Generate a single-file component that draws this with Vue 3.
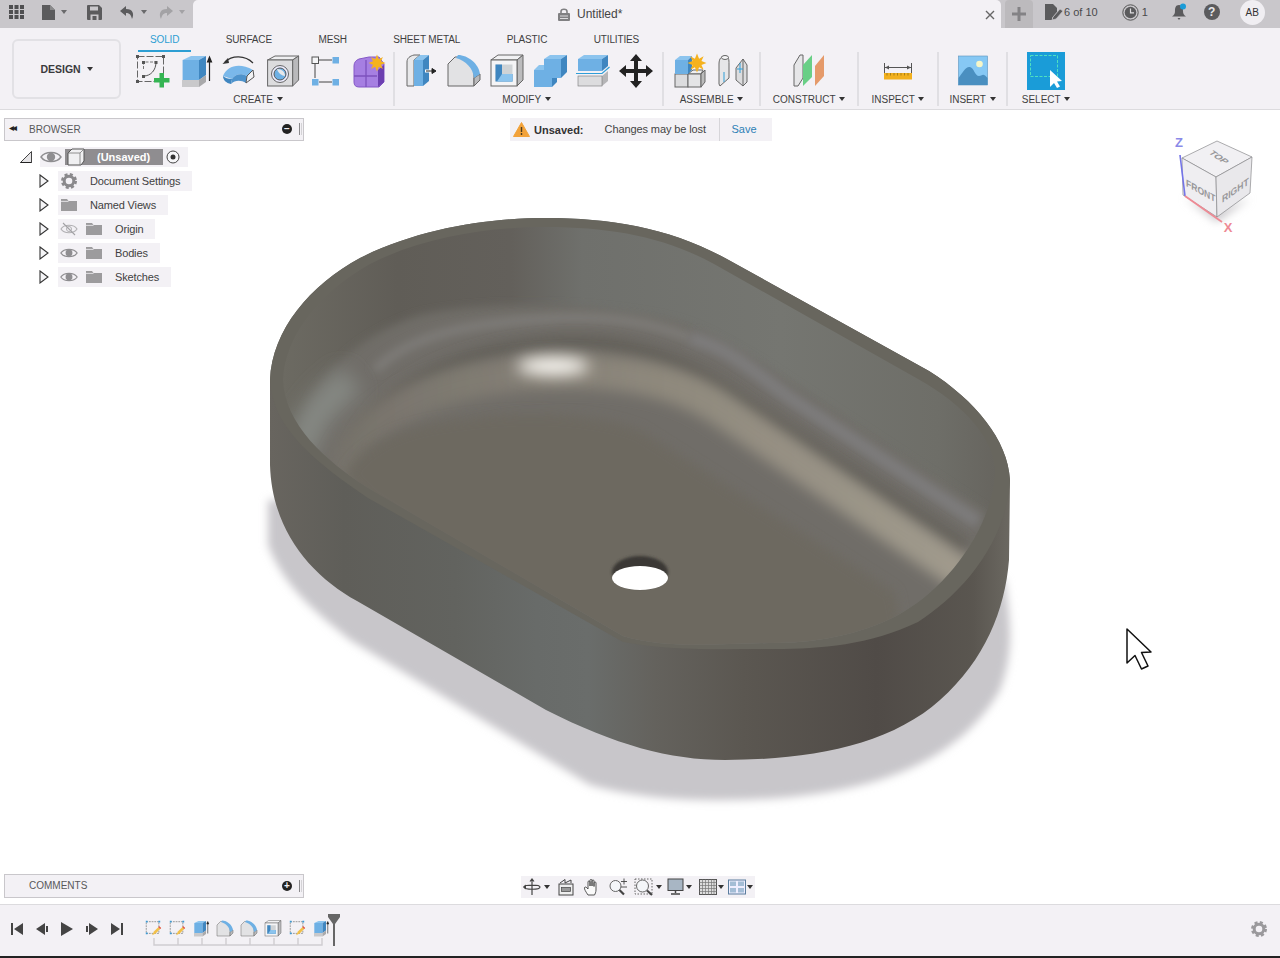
<script setup>
const tabs = ['SOLID', 'SURFACE', 'MESH', 'SHEET METAL', 'PLASTIC', 'UTILITIES']
const tree = [
  { name: 'Document Settings', kind: 'gear' },
  { name: 'Named Views', kind: 'folder' },
  { name: 'Origin', kind: 'off' },
  { name: 'Bodies', kind: 'eye' },
  { name: 'Sketches', kind: 'eye' },
]
const timeline = ['tl-sketch', 'tl-sketch', 'i-extrude', 'i-fillet', 'i-fillet', 'i-shell', 'tl-sketch', 'i-extrude']
const star = '0,-10 2.2,-4.5 7,-7 4.7,-2 10,0 4.7,2 7,7 2.2,4.5 0,10 -2.2,4.5 -7,7 -4.7,2 -10,0 -4.7,-2 -7,-7 -2.2,-4.5'
</script>

<template>
  <div class="app">
    <svg class="defs" aria-hidden="true">
      <defs>
        <symbol id="i-extrude" viewBox="0 0 36 36">
          <polygon points="4.6,8 13,4 28,4 21,8" fill="#8cc4ee" />
          <rect x="4.6" y="8" width="16.4" height="20" fill="#6eb0e4" />
          <polygon points="21,8 28,4 28,23 21,28" fill="#3f86c0" />
          <rect x="4" y="28" width="17" height="7" fill="#c9c9cb" />
          <polygon points="21,28 28,23 28,30 21,35" fill="#a9a9ab" />
          <path d="M31.5 29V7M29.5 10l2-5 2 5z" stroke="#222" stroke-width="1.2" fill="#222" />
        </symbol>
        <symbol id="i-fillet" viewBox="0 0 36 36">
          <path d="M2 34V12L9 5H14C22 5 29 14 28 26V34Z" fill="#e2e2e4" stroke="#666" />
          <path d="M28 26L34 22V28L28 34Z" fill="#b9b9bb" stroke="#666" />
          <path d="M12 3C22 3 33 12 34 22L28 26C27 16 20 9 10 6Z" fill="#6eb0e4" />
        </symbol>
        <symbol id="i-shell" viewBox="0 0 36 36">
          <polygon points="2,8 9,3 34,3 28,8" fill="#f1f1f3" stroke="#666" />
          <polygon points="28,8 34,3 34,28 28,34" fill="#bcbcbe" stroke="#666" />
          <rect x="2" y="8" width="26" height="26" fill="#f4f4f6" stroke="#666" />
          <rect x="6.5" y="12.5" width="17" height="17" fill="#cfd3d6" />
          <path d="M6.5 12.5H13V22H23.5V29.5H6.5Z" fill="#3f86c0" />
          <polygon points="13,22 23.5,22 23.5,29.5 8,29.5" fill="#8cc4ee" />
        </symbol>
        <symbol id="tl-sketch" viewBox="0 0 20 20">
          <rect x="2.5" y="3" width="14" height="13" fill="none" stroke="#777" stroke-width=".8" stroke-dasharray="2 1" />
          <path d="M2 2h2v2H2zM16 2h2v2h-2zM2 15h2v2H2z" fill="#3a9bd8" />
          <path d="M9 18L11 14L17 8L19 10L13 16Z" fill="#f2c04a" />
          <path d="M17 8L19 10L18 11L16 9Z" fill="#e04a5e" />
        </symbol>
        <symbol id="i-eye" viewBox="0 0 22 14">
          <path d="M1 7C5 1 17 1 21 7C17 13 5 13 1 7Z" fill="none" stroke="#8f8e91" stroke-width="1.4" />
          <circle cx="11" cy="7" r="4.2" fill="#8f8e91" />
        </symbol>
        <symbol id="i-folder" viewBox="0 0 18 14">
          <path d="M1 1H7L8.5 3H17V13H1Z" fill="#9c9b9d" />
          <path d="M1 3.4H8.5" stroke="#f3f1f5" stroke-width=".8" />
        </symbol>
      </defs>
    </svg>

    <header class="titlebar">
      <div class="tb-left">
        <svg class="ic-apps" width="15" height="14" viewBox="0 0 15 14"><path d="M0 0h4v4H0zM5.5 0h4v4h-4zM11 0h4v4h-4zM0 5h4v4H0zM5.5 5h4v4h-4zM11 5h4v4h-4zM0 10h4v4H0zM5.5 10h4v4h-4zM11 10h4v4h-4z" fill="#4f4f51" /></svg>
        <svg class="ic-file" width="13" height="15" viewBox="0 0 13 15"><path d="M0 0H8L13 5V15H0Z" fill="#5b5b5d" /><path d="M8 0V5H13" fill="#8a8a8c" /></svg>
        <i class="caret"></i>
        <svg class="ic-save" width="15" height="15" viewBox="0 0 15 15"><path d="M1 0H12L15 3V14Q15 15 14 15H1Q0 15 0 14V1Q0 0 1 0Z" fill="#5b5b5d" /><path d="M3 1.5H11V5.5H3ZM3.5 9.5H11.5V15H3.5Z" fill="#c9c7cb" /><rect x="5.5" y="11" width="4" height="4" fill="#5b5b5d" /></svg>
        <svg class="ic-undo" width="15" height="13" viewBox="0 0 15 13"><path d="M6 0L0 5L6 10V7C9 7 11 8.5 12 13C14.500 8 13 3 6 3Z" fill="#5b5b5d" /></svg>
        <i class="caret"></i>
        <svg class="ic-redo" width="15" height="13" viewBox="0 0 15 13"><path d="M9 0L15 5L9 10V7C6 7 4 8.500 3 13C.5 8 2 3 9 3Z" fill="#a3a2a5" /></svg>
        <i class="caret light"></i>
      </div>
      <div class="doc-tab">
        <svg class="ic-lock" width="12" height="13" viewBox="0 0 12 13"><path d="M3 6V3.500C3 .5 9 .5 9 3.500V6" fill="none" stroke="#808082" stroke-width="1.6" /><rect x="0" y="5" width="12" height="8" rx="1" fill="#808082" /><path d="M2 8H10M2 10.500H10" stroke="#f3f1f5" stroke-width=".8" /></svg>
        <span class="doc-name">Untitled*</span>
        <svg class="ic-close" width="10" height="10" viewBox="0 0 10 10"><path d="M1 1L9 9M9 1L1 9" stroke="#666" stroke-width="1.4" /></svg>
      </div>
      <div class="new-tab">
        <svg width="14" height="14" viewBox="0 0 14 14"><path d="M7 0V14M0 7H14" stroke="#838285" stroke-width="3" /></svg>
      </div>
      <div class="tb-right">
        <svg class="ic-doc" width="18" height="16" viewBox="0 0 18 16"><path d="M0 0H8L12 4V8L7 14V16H0Z" fill="#5b5b5d" /><path d="M8 13L15 5L18 7L11 15L7 16Z" fill="#5b5b5d" stroke="#c9c7cb" stroke-width=".7" /></svg>
        <span class="count">6 of 10</span>
        <svg class="ic-clock" width="17" height="17" viewBox="0 0 17 17"><circle cx="8.500" cy="8.500" r="7.700" fill="none" stroke="#555" stroke-width="1" /><circle cx="8.500" cy="8.500" r="5.800" fill="#5b5b5d" /><path d="M8.500 4.500V8.800H12" fill="none" stroke="#dedde0" stroke-width="1.200" /></svg>
        <span class="count one">1</span>
        <svg class="ic-bell" width="16" height="18" viewBox="0 0 16 18"><path d="M7 2C3.500 2 3 5 3 8C3 11 2 12 0 13.500H14C12 12 11 11 11 8C11 5 10.500 2 7 2Z" fill="#5b5b5d" /><path d="M5.500 15H8.500L7 17Z" fill="#5b5b5d" /><circle cx="11" cy="3.500" r="3" fill="#1a9cd8" /></svg>
        <span class="help">?</span>
        <span class="avatar">AB</span>
      </div>
    </header>

    <section class="toolbar">
      <button class="design">DESIGN <i class="caret dark"></i></button>
      <div class="tool-col">
        <nav class="tabs">
          <span v-for="(t, i) in tabs" :key="t" class="tab" :class="{ active: i === 0 }">{{ t }}</span>
        </nav>
        <div class="groups">
          <div class="group g-create">
            <div class="cells">
              <div class="cell">
                <svg width="36" height="36" viewBox="0 0 36 36">
                  <rect x="2.500" y="4.500" width="26" height="25" fill="none" stroke="#666" stroke-dasharray="7 2" />
                  <path d="M8.500 17V10H21" fill="none" stroke="#777" stroke-dasharray="3 1.500" />
                  <path d="M8.500 24C16 24 21 18 21 10" fill="none" stroke="#555" />
                  <path d="M1 3h3v3H1zM27 3h3v3h-3zM1 28h3v3H1zM7 9h3v3H7zM19.500 9h3v3h-3zM7 23h3v3H7z" fill="#555" />
                  <path d="M24.500 21H29V26H34.500V30.500H29V35.500H24.500V30.500H19V26H24.500Z" fill="#35b553" />
                </svg>
              </div>
              <div class="cell"><svg width="36" height="36"><use href="#i-extrude" /></svg></div>
              <div class="cell">
                <svg width="36" height="36" viewBox="0 0 36 36">
                  <path d="M4 10C11 3 24 3 32 11" fill="none" stroke="#333" stroke-width="1.200" />
                  <path d="M1.500 12L7 6L8 11Z" fill="#333" />
                  <path d="M2 24C6 14 18 10 32 18L26 24C20 21 14 22 11 27Z" fill="#7ab8ea" />
                  <path d="M2 24C2 28 5 31 10 32L11 27C7 27 4 26 2 24Z" fill="#3f86c0" />
                  <path d="M11 27C14 22 20 21 26 24L25 31C20 28 14 28 10 32Z" fill="#4e93cc" />
                  <polygon points="26,24 32,18 33,25 25,31" fill="#f2f2f4" stroke="#555" />
                </svg>
              </div>
              <div class="cell">
                <svg width="36" height="36" viewBox="0 0 36 36">
                  <polygon points="2.600,8 10,4 33.600,4 27.600,8" fill="#efeff1" stroke="#666" />
                  <polygon points="27.600,8 33.600,4 33.600,28 27.600,34" fill="#b9b9bb" stroke="#666" />
                  <rect x="2.600" y="8" width="25" height="26" fill="#dcdcde" stroke="#666" />
                  <circle cx="15" cy="22" r="8.500" fill="#eef" stroke="#666" />
                  <circle cx="15" cy="22" r="6" fill="#6eb0e4" stroke="#555" />
                  <path d="M12 17C17 17 20 20 20 24C17 24 13 21 12 17Z" fill="#e8e8ea" />
                </svg>
              </div>
              <div class="cell">
                <svg width="36" height="36" viewBox="0 0 36 36">
                  <path d="M11 8H24M7 12V26M11 30H24" stroke="#444" stroke-width="1" />
                  <rect x="4" y="5" width="6.500" height="6.500" fill="#f5f5f7" stroke="#555" />
                  <rect x="24.500" y="5" width="6.500" height="6.500" fill="#6eb0e4" />
                  <rect x="4" y="27" width="6.500" height="6.500" fill="#6eb0e4" />
                  <rect x="24.500" y="27" width="6.500" height="6.500" fill="#6eb0e4" />
                </svg>
              </div>
              <div class="cell">
                <svg width="36" height="36" viewBox="0 0 36 36">
                  <path d="M3 14Q3 9 8 7L18 5H28L33 12V30L28 35H8Q3 35 3 30Z" fill="#a67fe2" stroke="#8458c6" />
                  <path d="M3 24H26M15 8V35" stroke="#7d52bd" stroke-width="1.300" />
                  <path d="M27 18L33 13V30L27 35Z" fill="#6c3fb0" />
                  <g transform="translate(26 11)"><polygon :points="star" transform="scale(.85)" fill="#f5b21e" /></g>
                </svg>
              </div>
            </div>
            <div class="label l-create">CREATE <i class="caret dark"></i></div>
          </div>

          <div class="group g-modify">
            <div class="cells">
              <div class="cell">
                <svg width="36" height="36" viewBox="0 0 36 36">
                  <path d="M4 34V10C4 6 7 4 11 3H17L11 8V34Z" fill="#e8e8ea" stroke="#666" />
                  <polygon points="11,8 17,3 26,3 20,8" fill="#8cc4ee" />
                  <rect x="11" y="8" width="9" height="26" fill="#6eb0e4" />
                  <polygon points="20,8 26,3 26,29 20,34" fill="#3f86c0" />
                  <path d="M22 19H30" stroke="#fff" stroke-width="3" />
                  <path d="M23 19H30M29 16.500L33 19L29 21.500Z" stroke="#222" stroke-width="1" fill="#222" />
                </svg>
              </div>
              <div class="cell"><svg width="36" height="36"><use href="#i-fillet" /></svg></div>
              <div class="cell"><svg width="36" height="36"><use href="#i-shell" /></svg></div>
              <div class="cell">
                <svg width="36" height="36" viewBox="0 0 36 36">
                  <polygon points="2,18 7,13 25,13 20,18" fill="#8cc4ee" />
                  <rect x="2" y="18" width="18" height="17" fill="#6eb0e4" />
                  <polygon points="20,18 25,13 25,30 20,35" fill="#3f86c0" />
                  <polygon points="12,7 18,3 35,3 29,7" fill="#8cc4ee" />
                  <rect x="12" y="7" width="17" height="19" fill="#6eb0e4" />
                  <polygon points="29,7 35,3 35,20 29,26" fill="#3f86c0" />
                </svg>
              </div>
              <div class="cell">
                <svg width="36" height="36" viewBox="0 0 36 36">
                  <polygon points="3,7 9,3 33,3 27,7" fill="#8cc4ee" />
                  <rect x="3" y="7" width="24" height="12" fill="#6eb0e4" />
                  <polygon points="27,7 33,3 33,14 27,19" fill="#3f86c0" />
                  <polygon points="27,24 33,19 33,29 27,34" fill="#b5b5b7" />
                  <rect x="3" y="24" width="24" height="10" fill="#dcdcde" stroke="#777" stroke-width=".6" />
                  <path d="M1 21.500H27L34.500 15" fill="none" stroke="#2f9ed8" stroke-width="1.200" />
                </svg>
              </div>
              <div class="cell">
                <svg width="36" height="36" viewBox="0 0 36 36">
                  <path d="M18 2L24 9H20V17H28V13L35 19L28 25V21H20V29H24L18 36L12 29H16V21H8V25L1 19L8 13V17H16V9H12Z" fill="#222" />
                </svg>
              </div>
            </div>
            <div class="label l-modify">MODIFY <i class="caret dark"></i></div>
          </div>

          <div class="group g-assemble">
            <div class="cells">
              <div class="cell">
                <svg width="36" height="36" viewBox="0 0 36 36">
                  <rect x="3" y="22" width="13" height="13" fill="#dcdcde" stroke="#666" />
                  <polygon points="16,22 21,18 31,18 29,22" fill="#efeff1" stroke="#666" />
                  <rect x="16" y="22" width="13" height="13" fill="#e4e4e6" stroke="#666" />
                  <polygon points="29,22 33,18 33,30 29,35" fill="#bbb" stroke="#666" />
                  <rect x="3" y="8" width="13" height="14" fill="#6eb0e4" />
                  <polygon points="3,8 8,4 20,4 16,8" fill="#8cc4ee" />
                  <polygon points="16,8 20,4 20,18 16,22" fill="#3f86c0" />
                  <g transform="translate(25 11)"><polygon :points="star" transform="scale(.95)" fill="#f5b21e" /></g>
                </svg>
              </div>
              <div class="cell">
                <svg width="36" height="36" viewBox="0 0 36 36">
                  <path d="M3 32V12C3 6 6 4 9 4C13 4 13 8 13 12V26L4 34Z" fill="#e6e6e8" stroke="#666" />
                  <ellipse cx="9" cy="5.500" rx="3.500" ry="2" fill="#f5f5f7" stroke="#666" />
                  <path d="M8 20V30" stroke="#2f9ed8" />
                  <path d="M20 16L27 7L31 13V30L27 34L20 28Z" fill="#dcdcde" stroke="#666" />
                  <path d="M27 7V34" stroke="#666" />
                  <path d="M24 11V21M21 17H27" stroke="#2f9ed8" />
                </svg>
              </div>
            </div>
            <div class="label">ASSEMBLE <i class="caret dark"></i></div>
          </div>

          <div class="group g-construct">
            <div class="cells">
              <div class="cell">
                <svg width="36" height="36" viewBox="0 0 36 36">
                  <path d="M3 34V13L9 3H12V26L7 34Z" fill="#e6e6e8" stroke="#666" />
                  <polygon points="12,13 21,3 21,25 12,34" fill="#69cf86" />
                  <polygon points="24,14 33,3 33,24 24,34" fill="#e59a6a" />
                </svg>
              </div>
            </div>
            <div class="label">CONSTRUCT <i class="caret dark"></i></div>
          </div>

          <div class="group g-inspect">
            <div class="cells">
              <div class="cell">
                <svg width="36" height="36" viewBox="0 0 36 36">
                  <path d="M4.500 11V22M31.500 11V22M5 15.500H31" stroke="#555" />
                  <path d="M5 15.500L9 13.500V17.500ZM31 15.500L27 13.500V17.500Z" fill="#555" />
                  <rect x="4" y="21" width="28" height="6.500" fill="#f2b01e" />
                  <path d="M7 21v2.500M10.500 21v2.500M14 21v2.500M17.500 21v2.500M21 21v2.500M24.500 21v2.500M28 21v2.500" stroke="#8a6a10" stroke-width=".7" />
                </svg>
              </div>
            </div>
            <div class="label">INSPECT <i class="caret dark"></i></div>
          </div>

          <div class="group g-insert">
            <div class="cells">
              <div class="cell">
                <svg width="36" height="36" viewBox="0 0 36 36">
                  <rect x="3.500" y="4" width="29" height="29" fill="#86c8f4" stroke="#5a93bd" stroke-width=".6" />
                  <circle cx="24.500" cy="12" r="3.300" fill="#f6f6c8" />
                  <path d="M3.500 26C8 20 11 14 15 15C19 16 20 24 24 24C27 24 28 20 32.500 26V33H3.500Z" fill="#4a8fc0" />
                </svg>
              </div>
            </div>
            <div class="label">INSERT <i class="caret dark"></i></div>
          </div>

          <div class="group g-select">
            <div class="cells">
              <div class="cell">
                <svg width="38" height="38" viewBox="0 0 38 38">
                  <rect width="38" height="38" fill="#1a9cd8" />
                  <rect x="3.500" y="3.500" width="27" height="21" fill="none" stroke="#4fe0c0" stroke-dasharray="3 1.500" />
                  <path d="M23 18V35L27 31L30 36L33 34.500L30 29.500L35 29Z" fill="#fff" />
                </svg>
              </div>
            </div>
            <div class="label">SELECT <i class="caret dark"></i></div>
          </div>
        </div>
      </div>
    </section>

    <main class="viewport">
      <svg class="model" viewBox="0 110 1280 794" width="1280" height="794">
        <defs>
          <clipPath id="innerClip">
            <path d="M283 380C285 335 320 292 370 264C425 236 490 227 546 227C610 227 665 237 714 264L918 379C965 405 995 440 995 472C993 525 950 585 903 612C870 632 820 643 776 643C720 643 670 650 623 636L368 488C325 460 285 425 283 380Z" />
          </clipPath>
          <filter id="b1" x="-20%" y="-20%" width="140%" height="140%"><feGaussianBlur stdDeviation="1.500" /></filter>
          <filter id="b3" x="-20%" y="-20%" width="140%" height="140%"><feGaussianBlur stdDeviation="3" /></filter>
          <filter id="b4" x="-20%" y="-20%" width="140%" height="140%"><feGaussianBlur stdDeviation="4" /></filter>
          <filter id="b6" x="-30%" y="-30%" width="160%" height="160%"><feGaussianBlur stdDeviation="6" /></filter>
          <filter id="b7" x="-30%" y="-30%" width="160%" height="160%"><feGaussianBlur stdDeviation="7" /></filter>
          <filter id="b10" x="-60%" y="-60%" width="220%" height="220%"><feGaussianBlur stdDeviation="10" /></filter>
          <filter id="hl" x="-100%" y="-200%" width="300%" height="500%"><feGaussianBlur stdDeviation="8" /></filter>
          <linearGradient id="wallG" gradientUnits="userSpaceOnUse" x1="270" y1="0" x2="1010" y2="0">
            <stop offset="0" stop-color="#68655f" />
            <stop offset=".1" stop-color="#5f5e59" />
            <stop offset=".25" stop-color="#62635f" />
            <stop offset=".36" stop-color="#686b69" />
            <stop offset=".43" stop-color="#6a6d6b" />
            <stop offset=".52" stop-color="#64625d" />
            <stop offset=".64" stop-color="#5b5751" />
            <stop offset=".82" stop-color="#504b47" />
            <stop offset=".95" stop-color="#5a5650" />
            <stop offset="1" stop-color="#6b6861" />
          </linearGradient>
          <linearGradient id="innerG" gradientUnits="userSpaceOnUse" x1="283" y1="0" x2="995" y2="0">
            <stop offset="0" stop-color="#6c6a62" />
            <stop offset=".16" stop-color="#605d57" />
            <stop offset=".32" stop-color="#63605b" />
            <stop offset=".42" stop-color="#6f706c" />
            <stop offset=".7" stop-color="#757671" />
            <stop offset=".92" stop-color="#6e6e68" />
            <stop offset="1" stop-color="#67655f" />
          </linearGradient>
          <linearGradient id="bandG" gradientUnits="userSpaceOnUse" x1="330" y1="0" x2="950" y2="0">
            <stop offset="0" stop-color="#75716a" />
            <stop offset=".3" stop-color="#837e74" />
            <stop offset=".55" stop-color="#8f897d" />
            <stop offset="1" stop-color="#a09a8c" />
          </linearGradient>
        </defs>

        <path d="M268 500V545C285 590 320 615 350 640L590 785C650 802 720 802 780 798C880 790 960 760 1000 690C1015 650 1010 620 1005 580L600 500Z" fill="#c8c6ca" filter="url(#b4)" />

        <path d="M270 380C272 330 310 285 360 258C420 228 490 218 546 218C610 218 670 228 725 258L929 371C975 400 1008 440 1010 480L1009 560C1005 610 985 660 940 700C890 745 810 760 725 760C670 760 615 745 546 710L357 601C310 575 272 530 270 465Z" fill="url(#wallG)" />
        <path d="M270 380C272 330 310 285 360 258C420 228 490 218 546 218C610 218 670 228 725 258L929 371C975 400 1008 440 1010 480C1006 545 960 595 918 622C870 645 820 649 776 649C720 649 670 651 623 642L368 498C320 465 272 430 270 380Z" fill="#68665e" />

        <g clip-path="url(#innerClip)">
          <rect x="270" y="210" width="740" height="450" fill="url(#innerG)" />
          <path d="M296 445C300 400 340 340 420 315C480 302 590 300 680 322C710 332 730 345 760 362L985 510L1000 600L900 640L620 650L365 490Z" fill="#706d67" filter="url(#b4)" />
          <path d="M375 370C410 335 470 322 560 318C610 316 650 322 690 338" fill="none" stroke="#7e7c78" stroke-width="9" filter="url(#b4)" />
          <path d="M690 338C730 348 755 373 790 398L978 522" fill="none" stroke="#7d7b7c" stroke-width="14" filter="url(#b4)" />
          <path d="M300 455C306 420 325 400 352 380" fill="none" stroke="#858883" stroke-width="30" filter="url(#b10)" />
          <path d="M355 450C385 380 470 348 560 343C620 340 680 356 740 400L965 548" fill="none" stroke="#625f59" stroke-width="14" filter="url(#b6)" />
          <path d="M340 480C350 420 430 378 545 372C620 368 680 380 725 412L985 590" fill="none" stroke="url(#bandG)" stroke-width="34" filter="url(#b7)" />
          <path d="M345 475C360 445 400 428 440 422C500 412 580 408 640 430L895 592L905 650L620 660L368 500Z" fill="#6d6960" filter="url(#b6)" />
          <ellipse cx="553" cy="366" rx="36" ry="9" fill="#fffdf8" filter="url(#hl)" />
          <ellipse cx="640" cy="572" rx="28" ry="16" fill="#3a3835" filter="url(#b1)" />
          <ellipse cx="640" cy="578" rx="28" ry="12" fill="#fff" />
        </g>
      </svg>

      <div class="panel browser">
        <span class="collapse">◂◂</span>
        <span class="panel-title">BROWSER</span>
        <span class="dot">−</span>
        <span class="grip"></span>
      </div>

      <div class="tree">
        <div class="row root">
          <svg class="root-tri" width="12" height="12" viewBox="0 0 12 12"><path d="M.5 11.500L11.500 .5V11.500Z" fill="#e5e4e6" stroke="#444" /><path d="M.5 11.500H11.500" stroke="#222" /></svg>
          <div class="root-pill">
            <svg width="22" height="14"><use href="#i-eye" /></svg>
            <div class="root-label">
              <svg width="18" height="18" viewBox="0 0 18 18"><path d="M1 5L5 1H17V13L14 17H1Z" fill="#f0f0f2" stroke="#555" /><path d="M13 17V5H1M13 5L17 1" fill="none" stroke="#777" stroke-width=".8" /></svg>
              <b>(Unsaved)</b>
            </div>
            <svg class="radio" width="14" height="14" viewBox="0 0 14 14"><circle cx="7" cy="7" r="6" fill="#f7f7f9" stroke="#444" /><circle cx="7" cy="7" r="2.500" fill="#333" /></svg>
          </div>
        </div>
        <div v-for="r in tree" :key="r.name" class="row">
          <svg class="exp" width="10" height="14" viewBox="0 0 10 14"><path d="M1 1L9 7L1 13Z" fill="#f5f5f7" stroke="#333" stroke-width="1.100" /></svg>
          <div class="pill">
            <span class="pic">
              <svg v-if="r.kind === 'gear'" width="16" height="16" viewBox="0 0 16 16">
                <circle cx="8" cy="8" r="6.300" fill="none" stroke="#8a898c" stroke-width="3.400" stroke-dasharray="2.800 2.150" />
                <circle cx="8" cy="8" r="4.800" fill="none" stroke="#8a898c" stroke-width="3" />
              </svg>
              <svg v-else-if="r.kind === 'folder'" width="18" height="14"><use href="#i-folder" /></svg>
              <svg v-else-if="r.kind === 'eye'" width="18" height="12" viewBox="0 0 22 14"><use href="#i-eye" /></svg>
              <svg v-else width="18" height="14" viewBox="0 0 18 14">
                <path d="M1 7C4 2 14 2 17 7C14 12 4 12 1 7Z" fill="none" stroke="#b1b0b3" stroke-width="1.100" />
                <circle cx="9" cy="7" r="2.500" fill="none" stroke="#b1b0b3" />
                <path d="M3 1L15 13" stroke="#a3a2a5" stroke-width="1.100" />
              </svg>
            </span>
            <span v-if="r.kind === 'off' || r.kind === 'eye'" class="pic second"><svg width="18" height="14"><use href="#i-folder" /></svg></span>
            <span class="row-text">{{ r.name }}</span>
          </div>
        </div>
      </div>

      <div class="notice">
        <svg width="17" height="15" viewBox="0 0 17 15"><path d="M8.500 .5L16.500 14.500H.5Z" fill="#f2a23a" stroke="#f2a23a" stroke-linejoin="round" /><path d="M8.500 5V10M8.500 11V13" stroke="#4a3a1f" stroke-width="1.400" /></svg>
        <b class="n-title">Unsaved:</b>
        <span class="n-text">Changes may be lost</span>
        <span class="n-save">Save</span>
      </div>

      <svg class="cube" width="110" height="115" viewBox="1170 125 110 115">
        <defs><filter id="cs" x="-30%" y="-30%" width="160%" height="160%"><feGaussianBlur stdDeviation="4" /></filter></defs>
        <polygon points="1185,198 1217,222 1250,198 1217,210" fill="#c9c7cb" filter="url(#cs)" />
        <polygon points="1217,141 1252,157 1216,177 1182,158" fill="#f1f0f3" stroke="#8a898c" stroke-width=".7" />
        <polygon points="1182,158 1216,177 1217,217 1183,195" fill="#efeef1" stroke="#8a898c" stroke-width=".7" />
        <polygon points="1252,157 1250,193 1217,217 1216,177" fill="#e9e8eb" stroke="#8a898c" stroke-width=".7" />
        <path d="M1180 155L1185 196" stroke="#7474e8" stroke-width="1.600" />
        <path d="M1185 196L1222 222" stroke="#ee8a94" stroke-width="1.800" />
        <text x="1179" y="147" class="axis z">Z</text>
        <text x="1228" y="232" class="axis x">X</text>
        <text class="face" transform="matrix(.86 .48 0 1 1186 186)">FRONT</text>
        <text class="face" transform="matrix(.86 -.6 0 1 1222 203)">RIGHT</text>
        <text class="face" transform="matrix(.8 .55 -.8 .4 1208 153)">TOP</text>
      </svg>

      <svg class="cursor" width="30" height="44" viewBox="0 0 30 44">
        <path d="M2 2V36L10 28.500L16.500 42L23 39L16.500 25.500L26 25Z" fill="#fff" stroke="#111" stroke-width="1.500" stroke-linejoin="round" />
      </svg>

      <div class="panel comments">
        <span class="panel-title">COMMENTS</span>
        <span class="dot">+</span>
        <span class="grip"></span>
      </div>

      <div class="navbar">
        <span class="nb">
          <svg width="20" height="18" viewBox="0 0 20 18"><path d="M10 1V17M8 3.500L10 1L12 3.500M2 9C2 6.500 18 6.500 18 9C18 12 2 12 2 9Z" fill="none" stroke="#444" stroke-width="1.200" /><path d="M1 9L4 6.500V11.500Z" fill="#444" /></svg>
          <i class="caret dark"></i>
        </span>
        <span class="nb">
          <svg width="20" height="18" viewBox="0 0 20 18"><rect x="3" y="6" width="14" height="11" fill="#eee" stroke="#444" /><rect x="5.500" y="9.500" width="9" height="4" fill="#999" stroke="#444" stroke-width=".7" /><path d="M4 5L9 1.500V5L15 2V5" fill="none" stroke="#444" /></svg>
        </span>
        <span class="nb">
          <svg width="20" height="18" viewBox="0 0 20 18"><path d="M6 17C4 14 2 11 2.500 9.500C3 8.500 4.500 9 6 11V4C6 2.500 8 2.500 8 4V8V2.500C8 1 10 1 10 2.500V8V3C10 1.500 12 1.500 12 3V8.500V5C12 3.500 14 3.500 14 5V12C14 14 13 16 12.500 17Z" fill="#fafafa" stroke="#444" stroke-width=".9" /></svg>
        </span>
        <span class="nb">
          <svg width="20" height="18" viewBox="0 0 20 18"><circle cx="7.500" cy="8" r="5.500" fill="#f4f6f9" stroke="#666" /><path d="M11.500 12L16 16.500" stroke="#444" stroke-width="2.200" /><path d="M13 3.500H19M16 .5V6.500M13 9H19" stroke="#444" stroke-width=".9" /></svg>
        </span>
        <span class="nb">
          <svg width="20" height="18" viewBox="0 0 20 18"><rect x="1" y="1" width="17" height="15" fill="none" stroke="#666" stroke-dasharray="1.500 1.500" /><circle cx="8.500" cy="8" r="6" fill="#f4f6f9" stroke="#666" /><path d="M13 12.500L18 17" stroke="#444" stroke-width="2.200" /></svg>
          <i class="caret dark"></i>
        </span>
        <span class="nb n-display">
          <svg width="20" height="18" viewBox="0 0 20 18"><rect x="2" y="1" width="15" height="11.500" fill="#a8b6c4" stroke="#444" /><path d="M9.500 12.500V15M5 16H14" stroke="#444" stroke-width="1.500" /></svg>
          <i class="caret dark"></i>
        </span>
        <span class="nb n-grid">
          <svg width="20" height="18" viewBox="0 0 20 18"><rect x="1.500" y="1.500" width="17" height="15" fill="#ddd" stroke="#555" /><path d="M1.500 4.500H18.500M1.500 7.500H18.500M1.500 10.500H18.500M1.500 13.500H18.500M4.500 1.500V16.500M7.500 1.500V16.500M10.500 1.500V16.500M13.500 1.500V16.500M16 1.500V16.500" stroke="#777" stroke-width=".7" /></svg>
          <i class="caret dark"></i>
        </span>
        <span class="nb n-views">
          <svg width="20" height="18" viewBox="0 0 20 18"><rect x="1.500" y="2" width="17" height="14" fill="#eef" stroke="#5b7d9d" /><path d="M3 3.500H9V8H3ZM11 3.500H17V8H11ZM3 10H9V14.500H3ZM11 10H17V14.500H11Z" fill="#a3bdd6" /></svg>
          <i class="caret dark"></i>
        </span>
      </div>
    </main>

    <footer class="timeline">
      <div class="controls">
        <svg width="14" height="14" viewBox="0 0 14 14"><path d="M1 1H3V13H1ZM13 1V13L4 7Z" fill="#444" /></svg>
        <svg width="14" height="14" viewBox="0 0 14 14"><path d="M10 1V13L1 7ZM11 4H13V10H11Z" fill="#444" /></svg>
        <svg width="14" height="16" viewBox="0 0 14 16"><path d="M1 1L13 8L1 15Z" fill="#444" /></svg>
        <svg width="14" height="14" viewBox="0 0 14 14"><path d="M4 1V13L13 7ZM1 4H3V10H1Z" fill="#444" /></svg>
        <svg width="14" height="14" viewBox="0 0 14 14"><path d="M1 1V13L10 7ZM11 1H13V13H11Z" fill="#444" /></svg>
      </div>
      <div class="steps">
        <svg v-for="(t, i) in timeline" :key="i" class="step" width="18" height="18"><use :href="'#' + t" /></svg>
        <svg class="bracket" width="172" height="10" viewBox="0 0 172 10"><path d="M1 0V7H169V0M25 0V7M49 0V7M73 0V7M97 0V7M121 0V7M145 0V7" fill="none" stroke="#cfcdd1" stroke-width="1.400" /></svg>
        <svg class="marker" width="12" height="32" viewBox="0 0 12 32"><path d="M0 0H12V3L7 10V32H5V10L0 3Z" fill="#666" /></svg>
      </div>
      <svg class="settings" width="16" height="16" viewBox="0 0 16 16">
        <circle cx="8" cy="8" r="6.300" fill="none" stroke="#9a999c" stroke-width="3.400" stroke-dasharray="2.800 2.150" />
        <circle cx="8" cy="8" r="4.800" fill="none" stroke="#9a999c" stroke-width="3" />
      </svg>
    </footer>
  </div>
</template>

<style scoped>
.app {
  width: 1280px;
  height: 958px;
  display: flex;
  flex-direction: column;
  overflow: hidden;
  background: #fff;
  font-family: "Liberation Sans", Arial, sans-serif;
  font-size: 11px;
  color: #3f3f41;
}
.defs { position: absolute; width: 0; height: 0; }
.caret {
  display: inline-block;
  width: 0;
  height: 0;
  border-left: 3px solid transparent;
  border-right: 3px solid transparent;
  border-top: 4px solid #6a6a6c;
  vertical-align: 2px;
}
.caret.dark { border-top-color: #333; }
.caret.light { border-top-color: #a3a2a5; }

.titlebar { height: 28px; flex: none; display: flex; background: #c9c7cb; }
.tb-left { width: 193px; flex: none; display: flex; align-items: center; padding: 0 0 4px 9px; box-sizing: border-box; }
.tb-left .caret { margin-left: 6px; }
.ic-file { margin-left: 18px; }
.ic-save { margin-left: 20px; }
.ic-undo { margin-left: 18px; }
.ic-redo { margin-left: 11px; }
.doc-tab {
  width: 808px;
  flex: none;
  box-sizing: border-box;
  display: flex;
  align-items: center;
  padding: 0 6px 0 365px;
  background: #f3f1f5;
  border-radius: 5px 5px 0 0;
}
.doc-name { margin-left: 7px; font-size: 12px; color: #444; }
.ic-close { margin-left: auto; margin-top: 1px; }
.new-tab {
  width: 28px;
  margin-left: 4px;
  display: flex;
  align-items: center;
  justify-content: center;
  background: #bcbabd;
  border-radius: 4px 4px 0 0;
}
.tb-right { flex: 1; display: flex; align-items: center; padding-bottom: 4px; }
.ic-doc { margin-left: 12px; }
.count { margin-left: 1px; color: #4a4a4c; font-size: 11px; }
.ic-clock { margin-left: 24px; }
.count.one { margin-left: 3px; }
.ic-bell { margin-left: 24px; }
.help {
  width: 16px;
  height: 16px;
  margin-left: 16px;
  border-radius: 50%;
  background: #5b5b5d;
  color: #e8e7ea;
  font-weight: 700;
  font-size: 12px;
  line-height: 16px;
  text-align: center;
}
.avatar {
  width: 25px;
  height: 25px;
  margin-left: 20px;
  border-radius: 50%;
  background: #f0eef2;
  color: #333;
  font-size: 10px;
  line-height: 25px;
  text-align: center;
}

.toolbar {
  height: 82px;
  flex: none;
  box-sizing: border-box;
  display: flex;
  padding-left: 12px;
  background: #f3f1f5;
  border-bottom: 1px solid #dcdbde;
}
.design {
  width: 109px;
  height: 60px;
  margin: 11px 8px 0 0;
  padding: 0;
  background: #f3f1f5;
  border: 2px solid #e2e1e5;
  border-radius: 6px;
  font: 700 10.5px "Liberation Sans", Arial, sans-serif;
  color: #3a3a3c;
}
.design .caret { margin-left: 3px; }
.tool-col { flex: 1; min-width: 0; }
.tabs { height: 24px; display: flex; gap: 22.5px; padding-left: 9px; box-sizing: border-box; font-size: 10px; letter-spacing: -.15px; }
.tab { padding: 0 12px; line-height: 24px; height: 22px; color: #3f3f41; }
.tab.active { color: #2d9ed3; border-bottom: 2px solid #2d9ed3; }
.groups { display: flex; height: 54px; }
.group {
  flex: none;
  box-sizing: border-box;
  border-right: 2px solid #e0dfe3;
  display: flex;
  flex-direction: column;
  align-items: center;
}
.g-create { width: 266px; }
.g-modify { width: 269px; }
.g-assemble { width: 97px; }
.g-construct { width: 98px; }
.g-inspect { width: 80px; }
.g-insert { width: 69px; }
.g-select { width: 76px; border-right: 0; }
.cells { display: flex; height: 43px; }
.cell { width: 43.2px; display: flex; justify-content: center; align-items: flex-start; }
.g-assemble .cell { width: 44px; }
.label { line-height: 12px; white-space: nowrap; color: #3f3f41; font-size: 10px; }
.label .caret { margin-left: 1px; }
.l-create { margin-right: 6px; }
.l-modify { margin-right: 4px; }

.viewport { position: relative; flex: 1; min-height: 0; background: #fff; }
.model { position: absolute; left: 0; top: 0; }
.panel {
  position: absolute;
  left: 4px;
  width: 300px;
  height: 23px;
  box-sizing: border-box;
  display: flex;
  align-items: center;
  padding: 0 2px 1px 24px;
  background: #f3f1f5;
  border: 1px solid #c9c7cb;
  color: #555;
}
.browser { top: 8px; }
.comments { top: 764px; height: 24px; padding-bottom: 1px; }
.collapse { position: absolute; left: 4px; top: 3px; font-size: 10px; letter-spacing: -2px; color: #222; }
.panel-title { font-size: 10px; color: #58585a; }
.dot {
  margin-left: auto;
  width: 10px;
  height: 10px;
  border-radius: 50%;
  background: #222;
  color: #f3f1f5;
  font-size: 10px;
  font-weight: 700;
  line-height: 9px;
  text-align: center;
}
.grip { width: 1px; height: 12px; margin: 0 1px 0 7px; background: #8a898c; box-shadow: 2px 0 0 #d4d3d6; }

.tree { position: absolute; left: 0; top: 35px; }
.row { height: 24px; display: flex; align-items: center; padding-left: 39px; }
.row.root { padding-left: 20px; }
.exp { margin-right: 9px; }
.root-tri { margin-right: 8px; }
.root-pill {
  width: 148px;
  height: 20px;
  display: flex;
  align-items: center;
  background: #f3f1f5;
}
.root-pill > svg:first-child { margin-right: 3px; }
.root-label {
  width: 98px;
  height: 16px;
  display: flex;
  align-items: center;
  padding-left: 2px;
  box-sizing: border-box;
  background: #8f8d90;
  color: #fff;
}
.root-label b { margin-left: 12px; font-size: 11px; }
.radio { margin-left: 3px; }
.pill {
  height: 20px;
  display: flex;
  align-items: center;
  padding-right: 12px;
  background: #f3f1f5;
}
.pic { width: 22px; display: flex; justify-content: center; }
.pic.second { margin-left: 3px; }
.row-text { margin-left: 10px; font-size: 11px; letter-spacing: -.15px; color: #3f3f41; }

.notice {
  position: absolute;
  left: 510px;
  top: 8px;
  width: 262px;
  height: 23px;
  box-sizing: border-box;
  display: flex;
  align-items: center;
  padding-left: 3px;
  background: #f3f1f5;
}
.n-title { margin-left: 4px; font-size: 11px; color: #333; }
.n-text { margin-left: 21px; width: 114px; height: 23px; line-height: 22px; letter-spacing: -.1px; border-right: 1px solid #d6d5d9; color: #444; }
.n-save { margin-left: 12px; margin-top: -1px; color: #2d80b5; }

.cube { position: absolute; left: 1170px; top: 15px; }
.axis { font: 700 13px "Liberation Sans", Arial, sans-serif; text-anchor: middle; }
.axis.z { fill: #8a8ae8; }
.axis.x { fill: #ee8a94; }
.face { font: 700 10px "Liberation Sans", Arial, sans-serif; fill: #98979a; }
.cursor { position: absolute; left: 1125px; top: 517px; }

.navbar {
  position: absolute;
  left: 521px;
  top: 766px;
  width: 234px;
  height: 22px;
  display: flex;
  align-items: center;
  gap: 6px;
  padding-left: 1px;
  box-sizing: border-box;
  background: #f3f1f5;
}
.nb { display: flex; align-items: center; gap: 2px; flex: none; }
.n-display { margin-left: -2px; gap: 0; }
.n-grid { gap: 0; }
.n-views { margin-left: -3px; gap: 0; }

.timeline {
  height: 54px;
  flex: none;
  box-sizing: border-box;
  display: flex;
  align-items: center;
  background: #f3f1f5;
  border-top: 1px solid #dcdbde;
  border-bottom: 2px solid #222;
  padding: 0 13px 4px 10px;
}
.controls { display: flex; align-items: center; gap: 11px; width: 134px; flex: none; }
.steps { position: relative; display: flex; gap: 6px; margin-top: -2px; }
.step { flex: none; }
.bracket { position: absolute; left: 9px; top: 19px; }
.marker { position: absolute; left: 184px; top: -5px; }
.settings { margin-left: auto; }
</style>

<style>
html, body { margin: 0; background: #fff; }
</style>
